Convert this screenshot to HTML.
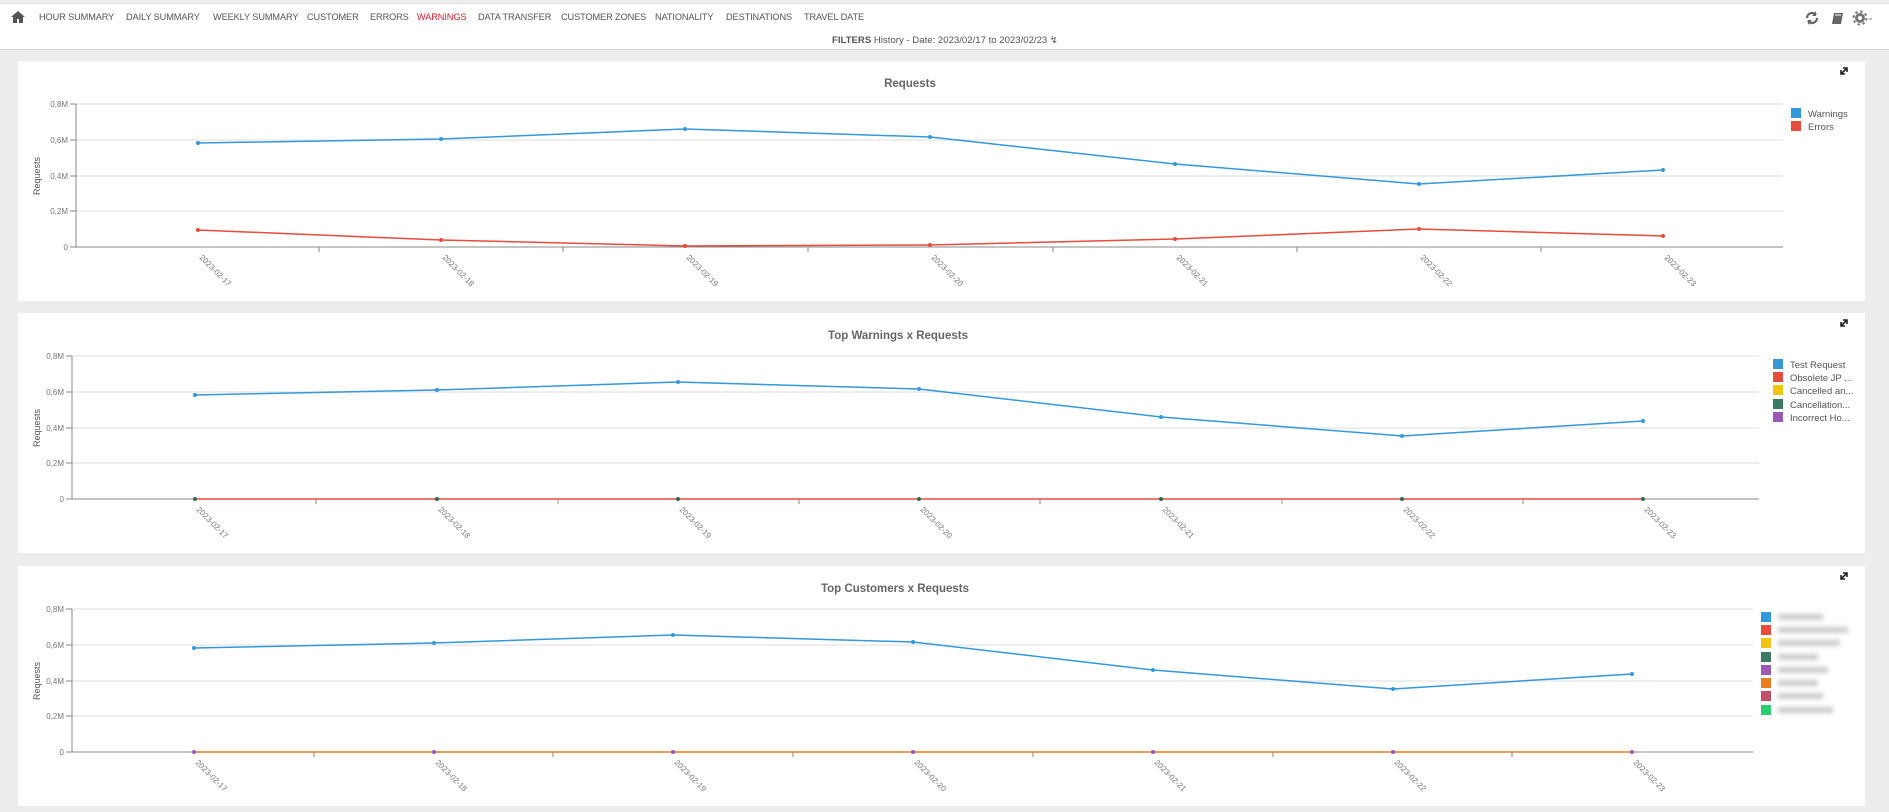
<!DOCTYPE html>
<html><head><meta charset="utf-8"><style>
body{margin:0;width:1889px;height:812px;background:#ededed;font-family:"Liberation Sans",sans-serif;position:relative;overflow:hidden}
.top{position:absolute;left:0;width:1889px;background:#fff;border-top:1px solid #ddd;border-bottom:1px solid #d6d6d6;box-sizing:border-box;top:3px;height:47px}
.nav span{position:absolute;top:12px;font-size:9.2px;color:#555;white-space:nowrap;letter-spacing:-0.1px}
.filt{position:absolute;top:35px;left:832px;font-size:9.6px;color:#555;white-space:nowrap}
.panel{position:absolute;left:18px;width:1847px;height:240px;background:#fff}
svg text{font-family:"Liberation Sans",sans-serif}
</style></head><body>
<div class="top"></div>
<svg style="position:absolute;left:11px;top:11px" width="14" height="12" viewBox="0 0 14 12"><path d="M7 0L0 6h2v6h4V8h2v4h4V6h2L7 0z" fill="#555"/></svg>
<div class="nav"><span style="left:39px">HOUR SUMMARY</span><span style="left:126px">DAILY SUMMARY</span><span style="left:213px">WEEKLY SUMMARY</span><span style="left:307px">CUSTOMER</span><span style="left:370px">ERRORS</span><span style="left:417px;color:#e0202a">WARNINGS</span><span style="left:478px">DATA TRANSFER</span><span style="left:561px">CUSTOMER ZONES</span><span style="left:655px">NATIONALITY</span><span style="left:726px">DESTINATIONS</span><span style="left:804px">TRAVEL DATE</span></div>
<div class="filt"><b>FILTERS</b> History - Date: 2023/02/17 to 2023/02/23 &#8623;</div>
<svg style="position:absolute;left:1804px;top:10px" width="80" height="16" viewBox="0 0 80 16">
<path d="M3 8a5 5 0 0 1 9-3M13 8a5 5 0 0 1-9 3" stroke="#666" stroke-width="2.2" fill="none"/><path d="M12 1v5H8zM4 15v-5h4z" fill="#666"/>
<path d="M30 3h9l-2 11h-9z" fill="#666"/><path d="M31 5h6" stroke="#fff"/>
<circle cx="56" cy="8" r="5" fill="#777"/><circle cx="56" cy="8" r="6.5" fill="none" stroke="#777" stroke-width="2" stroke-dasharray="2.5 2.6"/><circle cx="56" cy="8" r="2" fill="#fff"/><path d="M65 9h3" stroke="#777"/>
</svg>

<div class="panel" style="top:61px">
<svg width="1847" height="240">
<text x="892" y="26" font-size="11.5" font-weight="bold" fill="#666" text-anchor="middle">Requests</text>
<path d="M1829 7l-6 6M1823 9v4h4M1829 11V7h-4" stroke="#222" stroke-width="1.6" fill="none"/>
<g stroke="#e8e8e8" stroke-width="1.5"><path d="M58 43H1765M58 79H1765M58 115H1765M58 150H1765"/></g>
<path d="M58 43V186H1765" stroke="#888" fill="none"/>
<g stroke="#888"><path d="M52 43h6M52 79h6M52 115h6M52 150h6M52 186h6M301 186v5M545 186v5M790 186v5M1035 186v5M1279 186v5M1523 186v5"/></g>
<g font-size="8" fill="#777" text-anchor="end"><text x="50" y="46">0,8M</text><text x="50" y="82">0,6M</text><text x="50" y="118">0,4M</text><text x="50" y="153">0,2M</text><text x="50" y="189">0</text></g>
<text transform="translate(22,115) rotate(-90)" font-size="9" fill="#555" text-anchor="middle">Requests</text>
<polyline points="180,82 423,78 667,68 912,76 1157,103 1401,123 1645,109" fill="none" stroke="#3498db" stroke-width="1.5"/>
<polyline points="180,169 423,179 667,185 912,184 1157,178 1401,168 1645,175" fill="none" stroke="#e74c3c" stroke-width="1.5"/>
<g fill="#3498db"><circle cx="180" cy="82" r="2"/><circle cx="423" cy="78" r="2"/><circle cx="667" cy="68" r="2"/><circle cx="912" cy="76" r="2"/><circle cx="1157" cy="103" r="2"/><circle cx="1401" cy="123" r="2"/><circle cx="1645" cy="109" r="2"/></g>
<g fill="#e74c3c"><circle cx="180" cy="169" r="2"/><circle cx="423" cy="179" r="2"/><circle cx="667" cy="185" r="2"/><circle cx="912" cy="184" r="2"/><circle cx="1157" cy="178" r="2"/><circle cx="1401" cy="168" r="2"/><circle cx="1645" cy="175" r="2"/></g>
<g font-size="8" fill="#777"><text transform="translate(181,197) rotate(45)">2023-02-17</text><text transform="translate(424,197) rotate(45)">2023-02-18</text><text transform="translate(668,197) rotate(45)">2023-02-19</text><text transform="translate(913,197) rotate(45)">2023-02-20</text><text transform="translate(1158,197) rotate(45)">2023-02-21</text><text transform="translate(1402,197) rotate(45)">2023-02-22</text><text transform="translate(1646,197) rotate(45)">2023-02-23</text></g>
<rect x="1773" y="47" width="10" height="10" fill="#3498db"/><text x="1790" y="56" font-size="9.5" fill="#555">Warnings</text>
<rect x="1773" y="60" width="10" height="10" fill="#e74c3c"/><text x="1790" y="69" font-size="9.5" fill="#555">Errors</text>
</svg></div>

<div class="panel" style="top:313px">
<svg width="1847" height="240">
<text x="880" y="26" font-size="11.5" font-weight="bold" fill="#666" text-anchor="middle">Top Warnings x Requests</text>
<path d="M1829 7l-6 6M1823 9v4h4M1829 11V7h-4" stroke="#222" stroke-width="1.6" fill="none"/>
<g stroke="#e8e8e8" stroke-width="1.5"><path d="M54 43H1741M54 79H1741M54 115H1741M54 150H1741"/></g>
<path d="M54 43V186H1741" stroke="#888" fill="none"/>
<g stroke="#888"><path d="M48 43h6M48 79h6M48 115h6M48 150h6M48 186h6M298 186v5M540 186v5M781 186v5M1022 186v5M1264 186v5M1505 186v5"/></g>
<g font-size="8" fill="#777" text-anchor="end"><text x="46" y="46">0,8M</text><text x="46" y="82">0,6M</text><text x="46" y="118">0,4M</text><text x="46" y="153">0,2M</text><text x="46" y="189">0</text></g>
<text transform="translate(22,115) rotate(-90)" font-size="9" fill="#555" text-anchor="middle">Requests</text>
<polyline points="177,82 419,77 660,69 901,76 1143,104 1384,123 1625,108" fill="none" stroke="#3498db" stroke-width="1.5"/>
<path d="M177 186H1625" stroke="#e74c3c" stroke-width="1.5"/>
<g fill="#3498db"><circle cx="177" cy="82" r="2"/><circle cx="419" cy="77" r="2"/><circle cx="660" cy="69" r="2"/><circle cx="901" cy="76" r="2"/><circle cx="1143" cy="104" r="2"/><circle cx="1384" cy="123" r="2"/><circle cx="1625" cy="108" r="2"/></g>
<g fill="#2e6b55"><circle cx="177" cy="186" r="2"/><circle cx="419" cy="186" r="2"/><circle cx="660" cy="186" r="2"/><circle cx="901" cy="186" r="2"/><circle cx="1143" cy="186" r="2"/><circle cx="1384" cy="186" r="2"/><circle cx="1625" cy="186" r="2"/></g>
<g font-size="8" fill="#777"><text transform="translate(178,197) rotate(45)">2023-02-17</text><text transform="translate(420,197) rotate(45)">2023-02-18</text><text transform="translate(661,197) rotate(45)">2023-02-19</text><text transform="translate(902,197) rotate(45)">2023-02-20</text><text transform="translate(1144,197) rotate(45)">2023-02-21</text><text transform="translate(1385,197) rotate(45)">2023-02-22</text><text transform="translate(1626,197) rotate(45)">2023-02-23</text></g>
<g font-size="9.5" fill="#555">
<rect x="1755" y="46" width="10" height="10" fill="#3498db"/><text x="1772" y="55">Test Request</text>
<rect x="1755" y="59" width="10" height="10" fill="#e74c3c"/><text x="1772" y="68">Obsolete JP ...</text>
<rect x="1755" y="72" width="10" height="10" fill="#f1c40f"/><text x="1772" y="81">Cancelled an...</text>
<rect x="1755" y="86" width="10" height="10" fill="#3e7a63"/><text x="1772" y="95">Cancellation...</text>
<rect x="1755" y="99" width="10" height="10" fill="#9b59b6"/><text x="1772" y="108">Incorrect Ho...</text>
</g>
</svg></div>

<div class="panel" style="top:566px">
<svg width="1847" height="240">
<defs><filter id="b"><feGaussianBlur stdDeviation="2"/></filter></defs>
<text x="877" y="26" font-size="11.5" font-weight="bold" fill="#666" text-anchor="middle">Top Customers x Requests</text>
<path d="M1829 7l-6 6M1823 9v4h4M1829 11V7h-4" stroke="#222" stroke-width="1.6" fill="none"/>
<g stroke="#e8e8e8" stroke-width="1.5"><path d="M54 43H1735M54 79H1735M54 115H1735M54 150H1735"/></g>
<path d="M54 43V186H1735" stroke="#888" fill="none"/>
<g stroke="#888"><path d="M48 43h6M48 79h6M48 115h6M48 150h6M48 186h6M296 186v5M535 186v5M775 186v5M1015 186v5M1255 186v5M1494 186v5"/></g>
<g font-size="8" fill="#777" text-anchor="end"><text x="46" y="46">0,8M</text><text x="46" y="82">0,6M</text><text x="46" y="118">0,4M</text><text x="46" y="153">0,2M</text><text x="46" y="189">0</text></g>
<text transform="translate(22,115) rotate(-90)" font-size="9" fill="#555" text-anchor="middle">Requests</text>
<polyline points="176,82 416,77 655,69 895,76 1135,104 1375,123 1614,108" fill="none" stroke="#3498db" stroke-width="1.5"/>
<path d="M176 186H1614" stroke="#e67e22" stroke-width="1.5"/>
<g fill="#3498db"><circle cx="176" cy="82" r="2"/><circle cx="416" cy="77" r="2"/><circle cx="655" cy="69" r="2"/><circle cx="895" cy="76" r="2"/><circle cx="1135" cy="104" r="2"/><circle cx="1375" cy="123" r="2"/><circle cx="1614" cy="108" r="2"/></g>
<g fill="#9b59b6"><circle cx="176" cy="186" r="2"/><circle cx="416" cy="186" r="2"/><circle cx="655" cy="186" r="2"/><circle cx="895" cy="186" r="2"/><circle cx="1135" cy="186" r="2"/><circle cx="1375" cy="186" r="2"/><circle cx="1614" cy="186" r="2"/></g>
<g font-size="8" fill="#777"><text transform="translate(177,197) rotate(45)">2023-02-17</text><text transform="translate(417,197) rotate(45)">2023-02-18</text><text transform="translate(656,197) rotate(45)">2023-02-19</text><text transform="translate(896,197) rotate(45)">2023-02-20</text><text transform="translate(1136,197) rotate(45)">2023-02-21</text><text transform="translate(1376,197) rotate(45)">2023-02-22</text><text transform="translate(1615,197) rotate(45)">2023-02-23</text></g>
<rect x="1743" y="46" width="10" height="10" fill="#3498db"/>
<rect x="1743" y="59" width="10" height="10" fill="#e74c3c"/>
<rect x="1743" y="72" width="10" height="10" fill="#f1c40f"/>
<rect x="1743" y="86" width="10" height="10" fill="#3e7a63"/>
<rect x="1743" y="99" width="10" height="10" fill="#9b59b6"/>
<rect x="1743" y="112" width="10" height="10" fill="#e67e22"/>
<rect x="1743" y="125" width="10" height="10" fill="#c0506a"/>
<rect x="1743" y="139" width="10" height="10" fill="#2ecc71"/>
<g fill="#ccc" filter="url(#b)"><rect x="1760" y="48" width="45" height="6"/><rect x="1760" y="61" width="70" height="6"/><rect x="1760" y="74" width="62" height="6"/><rect x="1760" y="88" width="40" height="6"/><rect x="1760" y="101" width="50" height="6"/><rect x="1760" y="114" width="40" height="6"/><rect x="1760" y="127" width="45" height="6"/><rect x="1760" y="141" width="55" height="6"/></g>
</svg></div>
</body></html>
